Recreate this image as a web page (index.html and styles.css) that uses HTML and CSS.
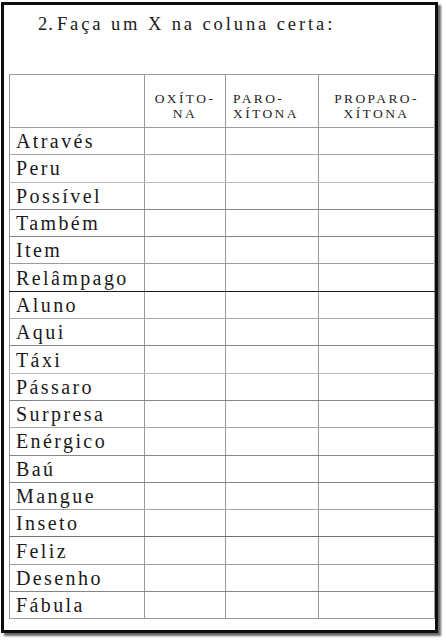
FILE: index.html
```html
<!DOCTYPE html>
<html lang="pt">
<head>
<meta charset="utf-8">
<link rel="stylesheet" href="styles.css">
</head>
<body>
<div class="frame">
  <h1 class="title"><span class="num">2.</span>Faça um X na coluna certa:</h1>
  <table class="grid">
    <colgroup>
      <col class="c1"><col class="c2"><col class="c3"><col class="c4">
    </colgroup>
    <thead>
      <tr class="head">
        <th></th>
        <th class="hc">OXÍTO-<br>NA</th>
        <th class="hl">PARO-<br>XÍTONA</th>
        <th class="hc">PROPARO-<br>XÍTONA</th>
      </tr>
    </thead>
    <tbody>
      <tr class="l2"><td>Através</td><td></td><td></td><td></td></tr>
      <tr class="l3"><td>Peru</td><td></td><td></td><td></td></tr>
      <tr class="dk"><td>Possível</td><td></td><td></td><td></td></tr>
      <tr class="dk"><td>Também</td><td></td><td></td><td></td></tr>
      <tr><td>Item</td><td></td><td></td><td></td></tr>
      <tr class="blk"><td>Relâmpago</td><td></td><td></td><td></td></tr>
      <tr class="l2"><td>Aluno</td><td></td><td></td><td></td></tr>
      <tr class="dk"><td>Aqui</td><td></td><td></td><td></td></tr>
      <tr class="l3"><td>Táxi</td><td></td><td></td><td></td></tr>
      <tr class="dk"><td>Pássaro</td><td></td><td></td><td></td></tr>
      <tr class="l2"><td>Surpresa</td><td></td><td></td><td></td></tr>
      <tr class="dk"><td>Enérgico</td><td></td><td></td><td></td></tr>
      <tr class="dk"><td>Baú</td><td></td><td></td><td></td></tr>
      <tr class="l2"><td>Mangue</td><td></td><td></td><td></td></tr>
      <tr class="dkk"><td>Inseto</td><td></td><td></td><td></td></tr>
      <tr><td>Feliz</td><td></td><td></td><td></td></tr>
      <tr class="dk"><td>Desenho</td><td></td><td></td><td></td></tr>
      <tr><td>Fábula</td><td></td><td></td><td></td></tr>
    </tbody>
  </table>
</div>
</body>
</html>
```

FILE: styles.css
```css
html, body {
  margin: 0;
  padding: 0;
  background: #ffffff;
}

body {
  width: 446px;
  height: 640px;
  overflow: hidden;
  font-family: "Liberation Serif", "Times New Roman", serif;
  color: #1a1a1a;
}

.frame {
  box-sizing: border-box;
  width: 437px;
  height: 631px;
  margin: 2px 0 0 1px;
  border: 3px solid #0d0d0d;
  box-shadow: 3px 3px 2px rgba(0, 0, 0, 0.6);
  background: #fff;
  padding: 0;
}

.title {
  box-sizing: border-box;
  margin: 0;
  padding: 7px 0 0 34px;
  font-size: 18.5px;
  line-height: 24px;
  font-weight: normal;
  letter-spacing: 2.9px;
  height: 69px;
}

.num {
  letter-spacing: 1px;
  margin-right: 3px;
}

.grid {
  margin-left: 5px;
  width: 425px;
  table-layout: fixed;
  border-collapse: collapse;
  border: 1px solid #9a9a9a;
}

.c1 { width: 135px; }
.c2 { width: 81px; }
.c3 { width: 93px; }
.c4 { width: 116px; }

.grid td,
.grid th {
  border-left: 1px solid #999;
  border-right: 1px solid #999;
  border-bottom: 1px solid #9c9c9c;
  padding: 0;
}

.grid td:nth-child(2),
.grid th:nth-child(2) {
  border-left-color: #888;
}

.grid td:nth-child(3),
.grid th:nth-child(3) {
  border-left-color: #666;
}

.grid td:nth-child(4),
.grid th:nth-child(4) {
  border-left-color: #b0b0b0;
}

.head {
  height: 53px;
}

.grid .head th {
  font-weight: normal;
  font-size: 13.5px;
  line-height: 14.5px;
  letter-spacing: 2.4px;
  vertical-align: bottom;
  padding-bottom: 6px;
  color: #1f1f1f;
}

.grid .hc {
  text-align: center;
}

.grid .hl {
  text-align: left;
  padding-left: 7px;
}

tbody tr {
  height: 27.3px;
}

tbody td {
  font-size: 20px;
  line-height: 26px;
  letter-spacing: 2.4px;
  vertical-align: middle;
  white-space: nowrap;
}

.grid tbody td:first-child {
  padding-left: 6px;
}

tr.l2 td { border-bottom-color: #a8a8a8; }
tr.l3 td { border-bottom-color: #bdbdbd; }
tr.dk td { border-bottom-color: #858585; }
tr.dkk td { border-bottom-color: #707070; }
tr.blk td { border-bottom-color: #1a1a1a; }
```
